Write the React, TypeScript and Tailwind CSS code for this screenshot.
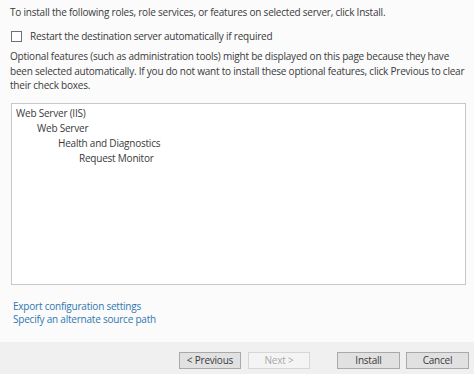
import React from "react";

export default function App() {
  const items = [
    { t: "Web Server (IIS)", pl: "pl-[4px]" },
    { t: "Web Server", pl: "pl-[25px]" },
    { t: "Health and Diagnostics", pl: "pl-[46px]" },
    { t: "Request Monitor", pl: "pl-[67px]" },
  ];
  return (
    <div
      className="w-[474px] h-[374px] bg-[#fbfbfb] flex flex-col text-[10px] text-[#3a3a3a] overflow-hidden tracking-[-0.22px]"
      style={{ fontFamily: '"Open Sans", "Noto Sans", sans-serif' }}
    >
      <div className="flex-1 flex flex-col pl-[10px] pr-[8px] pt-[5px]">
        <p className="leading-[15px] whitespace-nowrap">
          To install the following roles, role services, or features on selected server, click Install.
        </p>
        <div className="flex items-center mt-[11px] h-[11px] pl-[1px]">
          <div className="w-[11px] h-[11px] border border-[#707070] bg-white" />
          <span className="ml-[8px] leading-[15px]">
            Restart the destination server automatically if required
          </span>
        </div>
        <p className="mt-[7px] leading-[14.5px] whitespace-nowrap">
          Optional features (such as administration tools) might be displayed on this page because they have
          <br />
          been selected automatically. If you do not want to install these optional features, click Previous to clear
          <br />
          their check boxes.
        </p>
        <div className="mt-[10px] ml-[1px] w-[455px] h-[182px] border border-[#c8c8c8] bg-white pt-[2px]">
          {items.map((it) => (
            <div key={it.t} className={`${it.pl} leading-[15.3px]`}>
              {it.t}
            </div>
          ))}
        </div>
        <div className="mt-[15px] pl-[3px] text-[#2f78b0] leading-[13.5px]">
          <div>Export configuration settings</div>
          <div>Specify an alternate source path</div>
        </div>
      </div>
      <div className="h-[32px] bg-[#f0f0f0] flex items-start pt-[10px] pl-[179px]">
        <button className="w-[62px] h-[17px] bg-[#e1e1e1] border border-[#a9a9a9] text-[#3a3a3a] text-[10px] leading-[15px] flex items-center justify-center">
          &lt; Previous
        </button>
        <button className="ml-[7px] w-[62px] h-[17px] bg-[#f4f4f4] border border-[#d6d6d6] text-[#a8a8a8] text-[10px] leading-[15px] flex items-center justify-center">
          Next &gt;
        </button>
        <button className="ml-[27px] w-[63px] h-[17px] bg-[#e1e1e1] border border-[#a9a9a9] text-[#3a3a3a] text-[10px] leading-[15px] flex items-center justify-center">
          Install
        </button>
        <button className="ml-[6px] w-[63px] h-[17px] bg-[#e1e1e1] border border-[#a9a9a9] text-[#3a3a3a] text-[10px] leading-[15px] flex items-center justify-center">
          Cancel
        </button>
      </div>
    </div>
  );
}
